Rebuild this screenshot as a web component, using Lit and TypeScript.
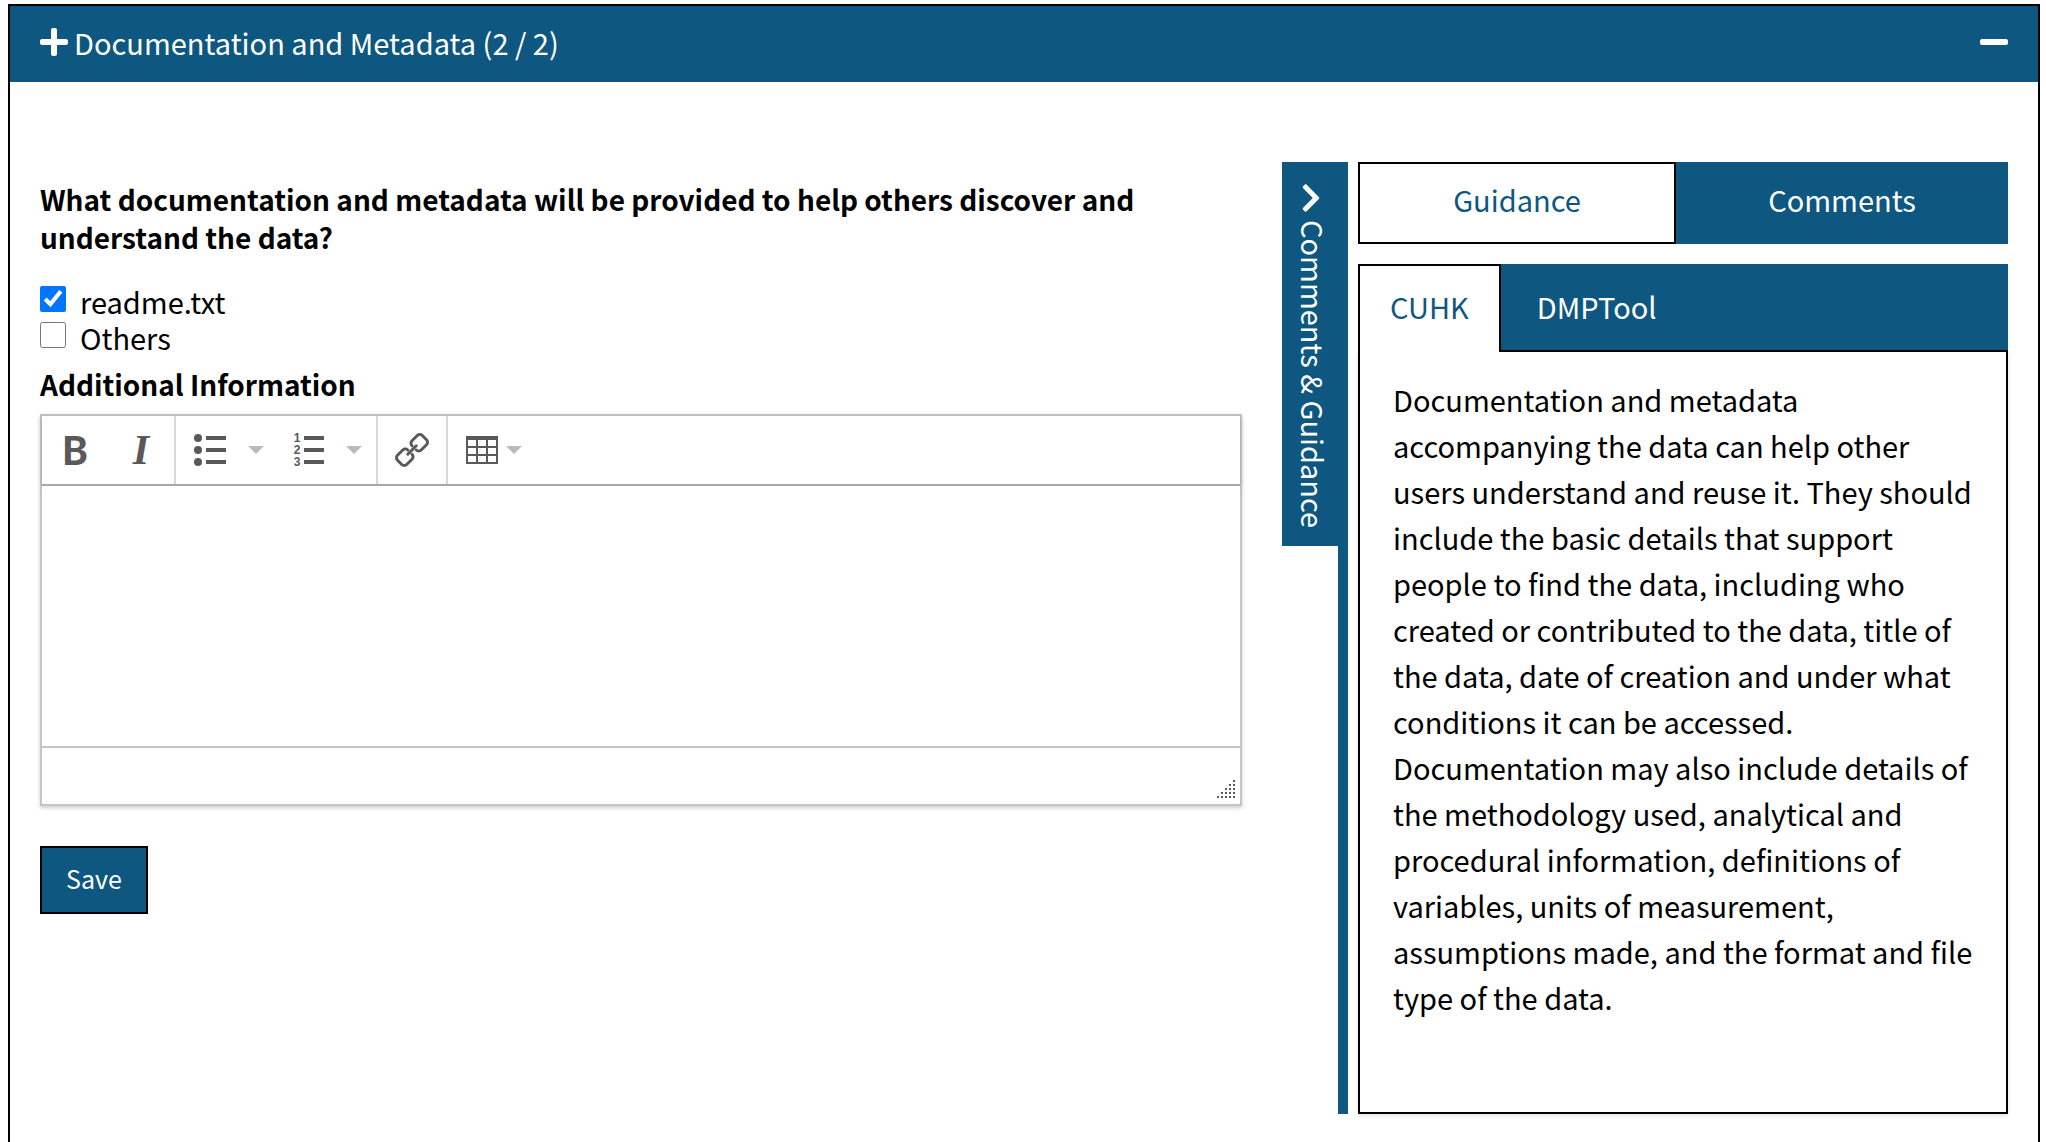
import { LitElement, html, css, svg } from "lit";
import { customElement, state } from "lit/decorators.js";

const caret = html`<svg class="caret" width="16" height="8" viewBox="0 0 16 8" aria-hidden="true"><path d="M0 0h16L8 8z" fill="#b5bcc2" /></svg>`;

const icons = {
  plus: html`<svg width="28" height="32" viewBox="0 0 448 512" fill="currentColor" aria-hidden="true"><path d="M416 208H272V64c0-17.67-14.33-32-32-32h-32c-17.67 0-32 14.33-32 32v144H32c-17.67 0-32 14.33-32 32v32c0 17.67 14.33 32 32 32h144v144c0 17.67 14.33 32 32 32h32c17.67 0 32-14.33 32-32V304h144c17.67 0 32-14.33 32-32v-32c0-17.67-14.33-32-32-32z" /></svg>`,
  minus: html`<svg width="28" height="32" viewBox="0 0 448 512" fill="currentColor" aria-hidden="true"><path d="M416 208H32c-17.67 0-32 14.33-32 32v32c0 17.67 14.33 32 32 32h384c17.67 0 32-14.33 32-32v-32c0-17.67-14.33-32-32-32z" /></svg>`,
  chevron: html`<svg width="20" height="32" viewBox="0 0 320 512" fill="currentColor" aria-hidden="true"><path d="M285.476 272.971L91.132 467.314c-9.373 9.373-24.569 9.373-33.941 0l-22.667-22.667c-9.357-9.357-9.375-24.522-.04-33.901L188.505 256 34.484 101.255c-9.335-9.379-9.317-24.544.04-33.901l22.667-22.667c9.373-9.373 24.569-9.373 33.941 0L285.475 239.03c9.373 9.372 9.373 24.568.001 33.941z" /></svg>`,
  bullets: html`<svg width="32" height="32" viewBox="0 0 32 32" fill="currentColor" aria-hidden="true">${[4, 16, 28].map((y) => svg`<circle cx="4" cy=${y} r="4" /><rect x="12" y=${y - 2} width="20" height="4" />`)}</svg>`,
  numbers: html`<svg width="30" height="32" viewBox="0 0 30 32" fill="currentColor" aria-hidden="true">${[4, 16, 28].map((y, i) => svg`<text class="digit" x="3" y=${y + 4} text-anchor="middle">${i + 1}</text><rect x="10" y=${y - 2} width="20" height="4" />`)}</svg>`,
  link: html`<svg width="32" height="32" viewBox="0 0 32 32" fill="none" stroke="currentColor" stroke-width="3" stroke-linejoin="round" stroke-linecap="round" aria-hidden="true"><g transform="rotate(-45 16 16)"><path d="M10 16H22" /><path d="M13 13A3.500 3.500 0 0 0 9.500 9.500H2A3.500 3.500 0 0 0 -1.500 13V19A3.500 3.500 0 0 0 2 22.500H9.500A3.500 3.500 0 0 0 13 19" /><path d="M19 13A3.500 3.500 0 0 1 22.500 9.500H30A3.500 3.500 0 0 1 33.500 13V19A3.500 3.500 0 0 1 30 22.500H22.500A3.500 3.500 0 0 1 19 19" /></g></svg>`,
  table: html`<svg width="32" height="28" viewBox="0 0 32 28" fill="currentColor" aria-hidden="true"><path fill-rule="evenodd" d="M0 0H32V28H0zM2 4V10H10V4zM12 4V10H20V4zM22 4V10H30V4zM2 12V18H10V12zM12 12V18H20V12zM22 12V18H30V12zM2 20V26H10V20zM12 20V26H20V20zM22 20V26H30V20z" /></svg>`,
  grip: html`<svg class="grip" width="18" height="18" viewBox="0 0 18 18" fill="#595959" aria-hidden="true">${[0, 1, 2, 3, 4].map((r) => Array.from({ length: r + 1 }, (_, c) => svg`<rect x=${16 - c * 4} y=${r * 4} width="2" height="2" />`))}</svg>`,
};

@customElement("app-root")
export class AppRoot extends LitElement {
  @state() private view = "Guidance";
  @state() private source = "CUHK";

  static styles = css`
    :host {
      --blue: #0e5780;
      display: block;
      padding: 4px 6px 0 8px;
      font: 29px/46px "Noto Sans CJK JP", "Noto Sans CJK SC", sans-serif;
      color: #000;
    }
    * { box-sizing: border-box; }
    svg { display: block; flex: none; overflow: visible; }
    button { font: inherit; color: inherit; border: 0; padding: 0; margin: 0; background: none; cursor: pointer; }
    .outer { height: calc(100vh - 4px); overflow: hidden; }
    .panel { border: 2px solid #000; min-height: calc(100vh + 20px); }
    .header {
      display: flex; align-items: center; justify-content: space-between;
      width: 100%; height: 76px; padding: 0 30px 4px; background: var(--blue); color: #fff;
    }
    .title { display: flex; align-items: center; gap: 6px; }
    .body {
      display: grid; grid-template-columns: minmax(0, 1202fr) minmax(0, 726fr);
      gap: 40px; padding: 80px 30px 28px;
    }
    .form { padding-top: 18px; }
    .question { margin: 0 0 26px; font-size: 28px; line-height: 38px; font-weight: 700; }
    .option { display: flex; height: 36px; gap: 14px; align-items: flex-start; line-height: 36px; }
    .option label { padding-top: 1px; }
    .option input { width: 26px; height: 26px; margin: 4px 0 0; flex: none; }
    .sub { display: block; margin-top: 8px; font-size: 28px; line-height: 44px; font-weight: 700; }
    .editor { border: 2px solid #c5c5c5; margin-top: 8px; box-shadow: 0 2px 4px rgba(0, 0, 0, 0.2); }
    .toolbar { display: flex; height: 70px; border-bottom: 2px solid #a9a9a9; color: #595959; box-shadow: 0 1px 4px rgba(0, 0, 0, 0.2); }
    .group { display: flex; align-items: center; border-right: 2px solid #dadada; }
    .group:last-child { border-right: 0; }
    .tool { display: flex; align-items: center; justify-content: center; height: 68px; color: #595959; }
    .pair { width: 66px; }
    .split { width: 100px; gap: 22px; justify-content: flex-start; padding-left: 18px; }
    .single { width: 68px; }
    .menu { width: 92px; gap: 8px; }
    .bold { font: 900 39px/66px Lato, sans-serif; }
    .italic { font: italic 700 42px/66px "Liberation Serif", serif; }
    .digit { font: 700 12px "Liberation Sans", sans-serif; }
    .entry { display: block; width: 100%; height: 260px; border: 0; padding: 16px; font: inherit; resize: none; outline: 0; }
    .status { display: flex; align-items: flex-end; justify-content: flex-end; height: 58px; padding: 0 5px 6px; border-top: 2px solid #c5c5c5; }
    .save { display: block; margin-top: 40px; height: 68px; padding: 0 24px 4px; border: 2px solid #000; background: var(--blue); color: #fff; font-size: 25px; }
    .side { display: grid; grid-template-columns: 66px minmax(0, 1fr); gap: 10px; }
    .rail { display: flex; flex-direction: column; }
    .toggle { display: flex; flex-direction: column; align-items: center; height: 384px; padding-top: 20px; background: var(--blue); color: #fff; }
    .toggle svg { margin-right: 8px; }
    .vertical { writing-mode: vertical-rl; line-height: 46px; margin: 6px 2px 0 0; }
    .stripe { flex: 1; width: 10px; align-self: flex-end; background: var(--blue); }
    .views { display: grid; grid-template-columns: 318fr 332fr; height: 82px; margin-bottom: 20px; background: var(--blue); }
    .tab { border: 2px solid transparent; color: #fff; padding-bottom: 8px; }
    .tab[aria-selected="true"] { border-color: #000; background: #fff; color: var(--blue); }
    .sources { display: flex; height: 88px; background: var(--blue); box-shadow: inset 0 -2px #000; }
    .source { border: 2px solid transparent; border-bottom: 0; color: #fff; padding: 0 34px 6px; }
    .source[aria-selected="true"] { padding: 0 30px 6px; border-color: #000; background: #fff; color: var(--blue); }
    .content { height: 762px; padding: 24px 26px 24px 33px; border: 2px solid #000; border-top: 0; box-shadow: 0 2px 4px rgba(0, 0, 0, 0.1); }
    .content p { margin: 0; }
  `;

  private viewTab(name: string) {
    return html`<button class="tab" role="tab" aria-selected=${this.view === name} @click=${() => (this.view = name)}>${name}</button>`;
  }

  private sourceTab(name: string) {
    return html`<button class="source" role="tab" aria-selected=${this.source === name} @click=${() => (this.source = name)}>${name}</button>`;
  }

  render() {
    return html`<div class="outer"><section class="panel">
      <button class="header" aria-expanded="true">
        <span class="title">${icons.plus}<span>Documentation and Metadata (2 / 2)</span></span>
        ${icons.minus}
      </button>
      <div class="body">
        <form class="form" @submit=${(e: Event) => e.preventDefault()}>
          <h2 class="question">What documentation and metadata will be provided to help others discover and understand the data?</h2>
          <div class="option"><input id="readme" type="checkbox" checked /><label for="readme">readme.txt</label></div>
          <div class="option"><input id="others" type="checkbox" /><label for="others">Others</label></div>
          <label class="sub" for="info">Additional Information</label>
          <div class="editor">
            <div class="toolbar" role="toolbar">
              <div class="group">
                <button type="button" class="tool pair bold" title="Bold">B</button>
                <button type="button" class="tool pair italic" title="Italic">I</button>
              </div>
              <div class="group">
                <button type="button" class="tool split" title="Bullet list">${icons.bullets}${caret}</button>
                <button type="button" class="tool split" title="Numbered list">${icons.numbers}${caret}</button>
              </div>
              <div class="group"><button type="button" class="tool single" title="Insert link">${icons.link}</button></div>
              <div class="group"><button type="button" class="tool menu" title="Table">${icons.table}${caret}</button></div>
            </div>
            <textarea id="info" class="entry"></textarea>
            <div class="status">${icons.grip}</div>
          </div>
          <button class="save">Save</button>
        </form>
        <aside class="side">
          <div class="rail">
            <button class="toggle">${icons.chevron}<span class="vertical">Comments &amp; Guidance</span></button>
            <div class="stripe"></div>
          </div>
          <div>
            <div class="views" role="tablist">${this.viewTab("Guidance")}${this.viewTab("Comments")}</div>
            <div class="sources" role="tablist">${this.sourceTab("CUHK")}${this.sourceTab("DMPTool")}</div>
            <div class="content" role="tabpanel">
              <p>Documentation and metadata accompanying the data can help other users understand and reuse it. They should include the basic details that support people to find the data, including who created or contributed to the data, title of the data, date of creation and under what conditions it can be accessed.</p>
              <p>Documentation may also include details of the methodology used, analytical and procedural information, definitions of variables, units of measurement, assumptions made, and the format and file type of the data.</p>
            </div>
          </div>
        </aside>
      </div>
    </section></div>`;
  }
}
